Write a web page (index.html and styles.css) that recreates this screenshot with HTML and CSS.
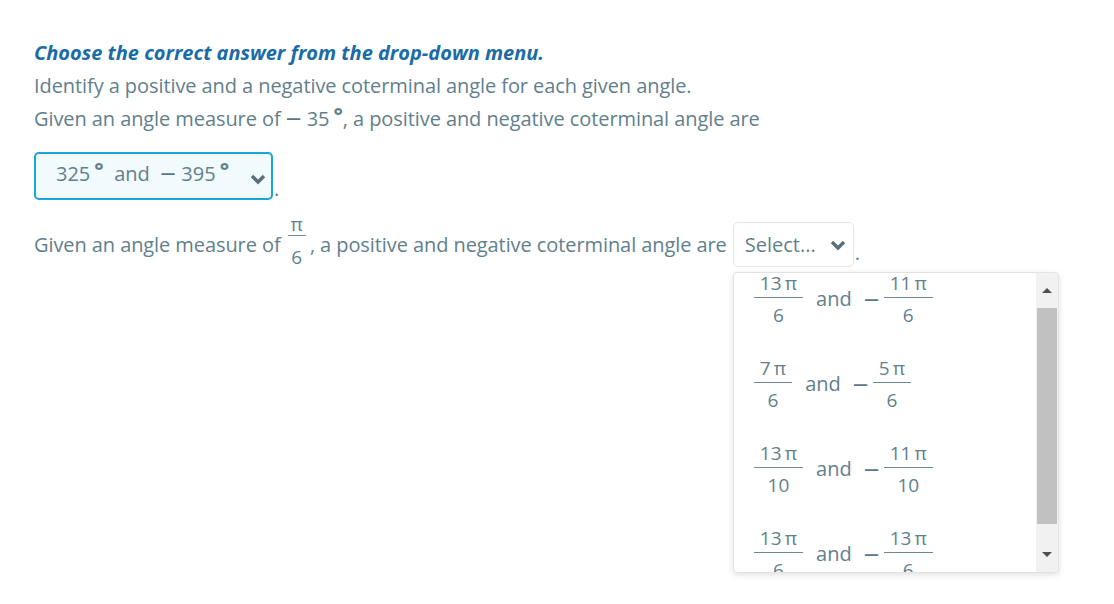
FILE: index.html
```html
<!DOCTYPE html>
<html lang="en">
<head>
    <meta charset="UTF-8">
    <meta name="viewport" content="width=device-width, initial-scale=1.0">
    <title>Coterminal angles</title>
    <link rel="stylesheet" href="styles.css">
</head>
<body>

    <div class="page">
        <!-- Enunciado -->
        <p class="prompt">Choose the correct answer from the drop-down menu.</p>
        <p class="line">Identify a positive and a negative coterminal angle for each given angle.</p>
        <p class="line">Given an angle measure of <span class="minus">&minus;</span> 35<span class="deg">&deg;</span>, a positive and negative coterminal angle are</p>

        <!-- Primeira resposta (já escolhida) -->
        <div class="answer-row">
            <div class="dropdown filled">
                <span class="value">325<span class="deg">&deg;</span> &nbsp;and &nbsp;<span class="minus">&minus;</span> 395<span class="deg">&deg;</span></span>
                <svg class="chevron" width="16" height="12" viewBox="0 0 16 12"><polyline points="2,3 8,9 14,3" fill="none" stroke="#5b6f79" stroke-width="3.4"/></svg>
            </div><span class="dot">.</span>
        </div>

        <!-- Segunda pergunta -->
        <div class="question-row">
            <span>Given an angle measure of</span>
            <span class="frac small"><span class="num">&pi;</span><span class="den">6</span></span>
            <span>, a positive and negative coterminal angle are</span>
            <div class="select-wrap">
                <div class="dropdown">
                    <span class="placeholder">Select...</span>
                    <svg class="chevron" width="16" height="12" viewBox="0 0 16 12"><polyline points="2,3 8,9 14,3" fill="none" stroke="#5b6f79" stroke-width="3.4"/></svg>
                </div>

                <!-- Menu aberto -->
                <div class="menu">
                    <div class="options">
                        <div class="option">
                            <span class="frac"><span class="num">13&thinsp;&pi;</span><span class="den">6</span></span>
                            <span class="and">and</span>
                            <span class="minus">&minus;</span>
                            <span class="frac"><span class="num">11&thinsp;&pi;</span><span class="den">6</span></span>
                        </div>
                        <div class="option">
                            <span class="frac"><span class="num">7&thinsp;&pi;</span><span class="den">6</span></span>
                            <span class="and">and</span>
                            <span class="minus">&minus;</span>
                            <span class="frac"><span class="num">5&thinsp;&pi;</span><span class="den">6</span></span>
                        </div>
                        <div class="option">
                            <span class="frac"><span class="num">13&thinsp;&pi;</span><span class="den">10</span></span>
                            <span class="and">and</span>
                            <span class="minus">&minus;</span>
                            <span class="frac"><span class="num">11&thinsp;&pi;</span><span class="den">10</span></span>
                        </div>
                        <div class="option">
                            <span class="frac"><span class="num">13&thinsp;&pi;</span><span class="den">6</span></span>
                            <span class="and">and</span>
                            <span class="minus">&minus;</span>
                            <span class="frac"><span class="num">13&thinsp;&pi;</span><span class="den">6</span></span>
                        </div>
                    </div>
                    <div class="scrollbar">
                        <div class="arrow up"></div>
                        <div class="track"><div class="thumb"></div></div>
                        <div class="arrow down"></div>
                    </div>
                </div>
            </div>
            <span class="dot">.</span>
        </div>
    </div>

</body>
</html>
```

FILE: styles.css
```css
/* Estilos gerais */
html, body {
    margin: 0;
    min-height: 100%;
}

body {
    background: #ffffff;
    font-family: 'Open Sans', sans-serif;
    color: #62808c;
    min-height: 604px;
}

.page {
    padding: 36px 0 0 34px;
    min-height: 568px;
}

p {
    margin: 0;
}

.prompt {
    font-size: 20px;
    line-height: 33px;
    font-weight: bold;
    font-style: italic;
    color: #1a6ba6;
}

.line {
    font-size: 20px;
    line-height: 33px;
    letter-spacing: -0.08px;
}

/* Sinal de menos mais largo, como no original */
.minus {
    color: #5b7682;
    font-size: 28px;
    line-height: 0;
    vertical-align: -3px;
}

.deg {
    font-weight: bold;
    font-size: 22px;
    line-height: 0;
    vertical-align: 3px;
    padding-left: 4px;
}

/* Caixas de seleção */
.answer-row {
    display: flex;
    align-items: flex-end;
    margin-top: 17px;
}

.dropdown {
    display: flex;
    align-items: center;
    box-sizing: border-box;
    background: #fff;
    border: 1px solid #e6e6e6;
    border-radius: 5px;
    font-size: 20px;
}

.dropdown.filled {
    width: 239px;
    height: 48px;
    padding: 0 5px 0 20px;
    background: #f1fafd;
    border: 2px solid #18a5d8;
    justify-content: space-between;
}

.dropdown.filled .value {
    margin-bottom: 5px;
}

.dropdown.filled .chevron {
    margin-top: 5px;
}

.dot {
    font-size: 20px;
    line-height: 22px;
    padding-left: 1px;
}

.question-row {
    display: flex;
    align-items: center;
    margin-top: 21px;
    font-size: 20px;
    letter-spacing: -0.08px;
}

.select-wrap {
    position: relative;
    margin-left: 6px;
    letter-spacing: 0;
}

.select-wrap .dropdown {
    width: 121px;
    height: 45px;
    padding: 0 7px 0 11px;
    justify-content: space-between;
}

.question-row .dot {
    align-self: flex-end;
    line-height: 30px;
}

/* Frações */
.frac {
    display: inline-flex;
    flex-direction: column;
    align-items: stretch;
    text-align: center;
    font-size: 19px;
    line-height: 22px;
}

.frac .num {
    padding: 0 6px 3px;
    border-bottom: 1px solid #6e8994;
}

.frac .den {
    padding-top: 6px;
}

.frac.small {
    margin: -8px 4px 0 7px;
}

.frac.small .num {
    padding: 0 3px;
}

.frac.small .den {
    padding-top: 10px;
}

/* Menu aberto */
.menu {
    position: absolute;
    top: 50px;
    left: 0;
    width: 326px;
    height: 301px;
    box-sizing: border-box;
    display: flex;
    background: #fff;
    border: 1px solid #e2e2e2;
    border-radius: 4px;
    box-shadow: 0 2px 6px rgba(0, 0, 0, 0.12);
    overflow: hidden;
    z-index: 10;
}

.options {
    flex-grow: 1;
    padding-left: 20px;
    overflow: hidden;
}

.option {
    display: flex;
    align-items: center;
    height: 85px;
}

.option:first-child {
    margin-top: -17px;
}

.option .and {
    margin: 0 12px 0 13px;
}

.option .minus {
    margin-right: 4px;
    vertical-align: 0;
}

.scrollbar {
    width: 22px;
    display: flex;
    flex-direction: column;
    background: #f1f1f1;
}

.arrow {
    height: 35px;
    display: flex;
    justify-content: center;
    align-items: center;
}

.arrow.up::before {
    content: "";
    border-left: 5px solid transparent;
    border-right: 5px solid transparent;
    border-bottom: 5px solid #505050;
}

.arrow.down::before {
    content: "";
    border-left: 5px solid transparent;
    border-right: 5px solid transparent;
    border-top: 5px solid #505050;
}

.track {
    flex-grow: 1;
    padding: 0 1px;
}

.thumb {
    height: 216px;
    background: #c1c1c1;
}
```
